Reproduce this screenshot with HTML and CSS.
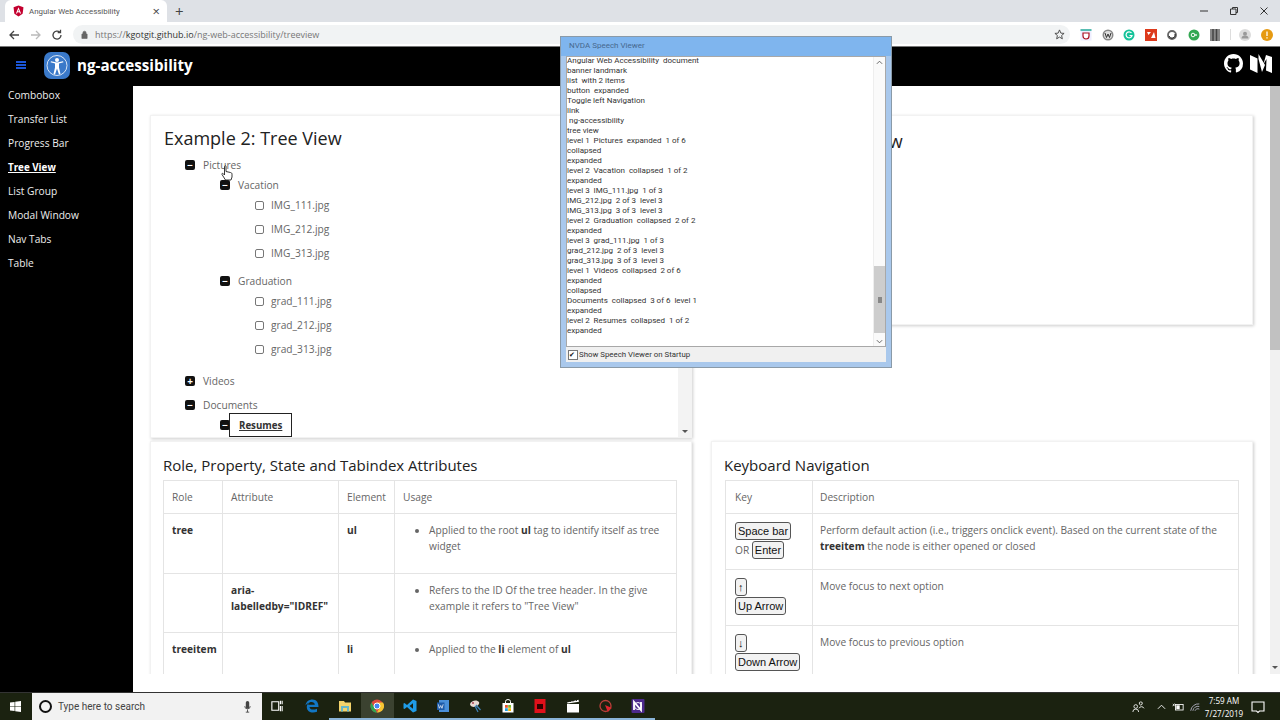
FILE: index.html
```html
<!DOCTYPE html>
<html lang="en">
<head>
    <meta charset="UTF-8">
    <title>Angular Web Accessibility</title>
    <link rel="stylesheet" href="styles.css">
</head>
<body>
<div class="screen">
    <div class="tabstrip">
        <div class="tab">
            <svg class="tab-logo" viewBox="0 0 12 12"><path d="M6 0 11.4 2 10.5 9 6 12 1.500 9 .6 2Z" fill="#c3002f"/><path d="M6 2 3.200 8.800H4.400L5 7.300H7L7.600 8.800H8.800ZM5.400 6.300 6 4.600 6.600 6.300Z" fill="#fff"/></svg>
            <span class="tab-title">Angular Web Accessibility</span>
            <span class="tab-close">×</span>
        </div>
        <span class="tab-new">+</span>
        <div class="win-btns">
            <svg viewBox="0 0 10 10"><path d="M1 5H9" stroke="#333"/></svg>
            <svg viewBox="0 0 10 10"><path d="M1.500 3H7V8.500H1.500ZM3.500 3V1.500H8.500V6.500H7" fill="none" stroke="#333"/></svg>
            <svg viewBox="0 0 10 10"><path d="M1.500 1.500 8.500 8.500M8.500 1.500 1.500 8.500" stroke="#333"/></svg>
        </div>
    </div>
    <div class="toolbar">
        <svg class="nav-icon" viewBox="0 0 12 12"><path d="M11 6H2M6 2 2 6 6 10" fill="none" stroke="#444" stroke-width="1.300"/></svg>
        <svg class="nav-icon" viewBox="0 0 12 12"><path d="M1 6H10M6 2 10 6 6 10" fill="none" stroke="#bbb" stroke-width="1.300"/></svg>
        <svg class="nav-icon" viewBox="0 0 12 12"><path d="M10 6A4 4 0 1 1 8.800 3.200M9.500 .8V3.600H6.700" fill="none" stroke="#444" stroke-width="1.300"/></svg>
        <div class="omnibox">
            <svg class="lock" viewBox="0 0 8 10"><path d="M1 4.500H7V9.500H1ZM2.200 4.500V3A1.800 1.800 0 0 1 5.800 3V4.500" fill="#666" stroke="#666" stroke-width=".7" fill-opacity="1"/></svg>
            <span class="url">https://<b>kgotgit.github.io</b>/ng-web-accessibility/treeview</span>
            <svg class="star" viewBox="0 0 12 12"><path d="M6 1 7.500 4.500 11 4.800 8.300 7.100 9.100 10.700 6 8.800 2.900 10.700 3.700 7.100 1 4.800 4.500 4.500Z" fill="none" stroke="#444"/></svg>
        </div>
        <div class="extensions">
            <svg viewBox="0 0 12 12"><rect x=".5" y=".5" width="11" height="11" fill="#eef"/><path d="M.5 1H11.500" stroke="#2a9" stroke-width="1.500"/><path d="M3 4H9V7A3 3 0 0 1 3 7Z" fill="#fff" stroke="#a12" stroke-width="1.200"/></svg>
            <svg viewBox="0 0 12 12"><circle cx="6" cy="6" r="5.500" fill="#888"/><circle cx="6" cy="6" r="4" fill="#ddd"/><path d="M3 4 4.500 8.500 6 5 7.500 8.500 9 4" fill="none" stroke="#333"/></svg>
            <svg viewBox="0 0 12 12"><circle cx="6" cy="6" r="5.500" fill="#15c39a"/><path d="M8.500 4A3 3 0 1 0 9 6.500H6.500" fill="none" stroke="#fff" stroke-width="1.200"/></svg>
            <svg viewBox="0 0 12 12"><rect width="12" height="12" fill="#dd3a1c"/><path d="M2 3H6L3.500 6M6 9 9 3 10.500 9Z" fill="#fff"/></svg>
            <svg viewBox="0 0 12 12"><circle cx="6" cy="6" r="4" fill="none" stroke="#666" stroke-width="1.800"/><path d="M3 7A3 3 0 0 0 9 5" fill="none" stroke="#222"/></svg>
            <svg viewBox="0 0 12 12"><circle cx="6" cy="6" r="5.500" fill="#34a853"/><circle cx="5" cy="6" r="1.800" fill="none" stroke="#fff"/><path d="M8 5V7M7 6H9" stroke="#fff" stroke-width=".8"/></svg>
            <svg viewBox="0 0 12 12"><rect x="1" width="10" height="12" fill="#888"/><path d="M4 0V12M7.500 0V12" stroke="#444" stroke-width="1.500"/></svg>
            <i class="ext-sep"></i>
            <svg viewBox="0 0 12 12"><circle cx="6" cy="6" r="6" fill="#dcdcdc"/><circle cx="6" cy="4.700" r="2" fill="#999"/><path d="M2.500 9.500A3.500 3 0 0 1 9.500 9.500Z" fill="#999"/></svg>
            <svg viewBox="0 0 12 12"><circle cx="6" cy="6" r="6" fill="#e69a12"/><path d="M6 2.500V7M6 8.300V9.500" stroke="#fff" stroke-width="1.300"/></svg>
        </div>
    </div>
    <div class="app">
        <header class="app-header">
            <span class="burger"><i></i><i></i><i></i></span>
            <span class="brand-logo">
                <svg viewBox="0 0 26 26"><circle cx="13" cy="13" r="10" fill="none" stroke="#fff" stroke-width=".8"/><circle cx="13" cy="7.500" r="2" fill="#fff"/><path d="M6.500 9.800 11 11V15L9.500 21.500 11 22 13 16 15 22 16.500 21.500 15 15V11L19.500 9.800 19 8.800 13 10 7 8.800Z" fill="#fff"/></svg>
            </span>
            <span class="brand-name">ng-accessibility</span>
            <span class="header-links">
                <svg class="github" viewBox="0 0 16 16"><path fill="#fff" d="M8 0C3.580 0 0 3.580 0 8c0 3.540 2.290 6.530 5.470 7.590.4.070.55-.17.55-.38 0-.19-.01-.82-.01-1.490-2.010.37-2.530-.49-2.690-.94-.09-.23-.48-.94-.82-1.130-.28-.15-.68-.52-.01-.53.630-.01 1.080.58 1.230.82.720 1.210 1.870.87 2.330.66.070-.52.280-.87.510-1.070-1.780-.2-3.640-.89-3.640-3.950 0-.87.31-1.590.82-2.150-.08-.2-.36-1.020.08-2.120 0 0 .67-.21 2.200.82.640-.18 1.320-.27 2-.27s1.360.09 2 .27c1.530-1.040 2.200-.82 2.200-.82.44 1.100.16 1.920.08 2.120.51.560.82 1.270.82 2.150 0 3.070-1.870 3.750-3.650 3.950.29.250.54.730.54 1.480 0 1.070-.01 1.930-.01 2.200 0 .21.150.46.550.38A8.010 8.010 0 0 0 16 8c0-4.420-3.580-8-8-8z"/></svg>
                <svg class="medium" viewBox="0 0 22 19"><path fill="#fff" d="M0 1 7.500 4.500V19L0 15.500ZM8.500 0 15 11 12 18 8.500 5ZM16 1 22 3V19L16 16.500 16.500 5 13.500 10Z"/></svg>
            </span>
        </header>
        <div class="app-body">
            <nav class="sidebar">
                <a>Combobox</a>
                <a>Transfer List</a>
                <a>Progress Bar</a>
                <a class="current">Tree View</a>
                <a>List Group</a>
                <a>Modal Window</a>
                <a>Nav Tabs</a>
                <a>Table</a>
            </nav>
            <main class="content">
                <div class="content-clip">
                    <div class="cards">
                        <section class="card card-demo">
                            <div class="demo-inner">
                                <h1 class="demo-title">Example 2: Tree View</h1>
                                <ul class="tree">
                                    <li>
                                        <div class="node"><span class="sq">−</span>Pictures</div>
                                        <ul>
                                            <li>
                                                <div class="node"><span class="sq">−</span>Vacation</div>
                                                <ul>
                                                    <li><div class="node"><span class="box"></span>IMG_111.jpg</div></li>
                                                    <li><div class="node"><span class="box"></span>IMG_212.jpg</div></li>
                                                    <li><div class="node"><span class="box"></span>IMG_313.jpg</div></li>
                                                </ul>
                                            </li>
                                            <li>
                                                <div class="node"><span class="sq">−</span>Graduation</div>
                                                <ul>
                                                    <li><div class="node"><span class="box"></span>grad_111.jpg</div></li>
                                                    <li><div class="node"><span class="box"></span>grad_212.jpg</div></li>
                                                    <li><div class="node"><span class="box"></span>grad_313.jpg</div></li>
                                                </ul>
                                            </li>
                                        </ul>
                                    </li>
                                    <li><div class="node"><span class="sq">+</span>Videos</div></li>
                                    <li>
                                        <div class="node"><span class="sq">−</span>Documents</div>
                                        <ul>
                                            <li><div class="node"><span class="sq">−</span><span class="focused">Resumes</span></div></li>
                                        </ul>
                                    </li>
                                </ul>
                            </div>
                            <div class="demo-scroll"><span class="arrow-down"></span></div>
                        </section>
                        <section class="card card-code">
                            <h1 class="demo-title">Example 1: Tree View</h1>
                        </section>
                        <section class="card card-table">
                            <h2>Role, Property, State and Tabindex Attributes</h2>
                            <table class="roles">
                                <tr class="head"><td class="c-role">Role</td><td class="c-attr">Attribute</td><td class="c-el">Element</td><td>Usage</td></tr>
                                <tr class="r60">
                                    <td><b>tree</b></td><td></td><td><b>ul</b></td>
                                    <td><ul><li>Applied to the root <b>ul</b> tag to identify itself as tree widget</li></ul></td>
                                </tr>
                                <tr class="r60">
                                    <td></td><td><b>aria-labelledby="IDREF"</b></td><td></td>
                                    <td><ul><li>Refers to the ID Of the tree header. In the give example it refers to "Tree View"</li></ul></td>
                                </tr>
                                <tr class="r60">
                                    <td><b>treeitem</b></td><td></td><td><b>li</b></td>
                                    <td><ul><li>Applied to the <b>li</b> element of <b>ul</b></li></ul></td>
                                </tr>
                            </table>
                        </section>
                        <section class="card card-table">
                            <h2>Keyboard Navigation</h2>
                            <table class="keys">
                                <tr class="head"><td class="c-key">Key</td><td>Description</td></tr>
                                <tr class="r56">
                                    <td class="keycell"><kbd>Space bar</kbd><br>OR <kbd>Enter</kbd></td>
                                    <td>Perform default action (i.e., triggers onclick event). Based on the current state of the <b>treeitem</b> the node is either opened or closed</td>
                                </tr>
                                <tr class="r56">
                                    <td class="keycell"><kbd class="thin">↑</kbd><br><kbd>Up Arrow</kbd></td>
                                    <td>Move focus to next option</td>
                                </tr>
                                <tr class="r56">
                                    <td class="keycell"><kbd class="thin">↓</kbd><br><kbd>Down Arrow</kbd></td>
                                    <td>Move focus to previous option</td>
                                </tr>
                            </table>
                        </section>
                    </div>
                </div>
            </main>
            <div class="page-scroll"><div class="page-thumb"></div><span class="arrow-down"></span></div>
        </div>
    </div>
    <footer class="taskbar">
        <svg class="start" viewBox="0 0 12 12"><path fill="#fff" d="M0 1.700 5 1V5.700H0ZM5.700 .9 12 0V5.700H5.700ZM0 6.300H5V11L0 10.300ZM5.700 6.300H12V12L5.700 11.100Z"/></svg>
        <div class="search">
            <span class="cortana"></span>
            <span class="search-text">Type here to search</span>
            <svg class="mic" viewBox="0 0 8 14"><rect x="2" width="4" height="9" rx="2" fill="#444"/><path d="M.8 6A3.200 3.200 0 0 0 7.200 6M4 10V13M2 13H6" fill="none" stroke="#444"/></svg>
        </div>
        <div class="task first">
            <svg viewBox="0 0 14 14"><path d="M1 2H9V12H1ZM11 1V5M13 1V5M11 7V13M13 7V13" fill="none" stroke="#fff" stroke-width="1.300"/></svg>
        </div>
        <div class="task">
            <svg viewBox="0 0 14 14"><path fill="#1277c4" d="M.5 6.500C1 2.500 4 .5 7.500.5 11.500.5 13.500 3.500 13.500 8H4.500C4.700 10.500 8 11.500 12 9.700V12.700C7 14.700 1.500 12.800 1.800 7.500 2 5.500 3 4.500 4.500 3.500 3.500 4.500 3.300 5.300 3.200 5.800H9.800C9.800 3 6.500 2.500 4.500 3.500 2.800 4 1.500 5 .5 6.500Z"/></svg>
        </div>
        <div class="task on">
            <svg viewBox="0 0 14 14"><path fill="#f3d36b" d="M1 2H6L7 3.500H13V12.500H1Z"/><path fill="#66b7c9" d="M3 7H11V12.500H9V9H5V12.500H3Z"/></svg>
        </div>
        <div class="task on active">
            <svg viewBox="0 0 14 14"><circle cx="7" cy="7" r="6.500" fill="#dd4b3e"/><path fill="#f6c532" d="M7 3.500H13A6.500 6.500 0 0 1 7 13.500L10 8Z"/><path fill="#2fa551" d="M1.500 3.500 4.500 9 7 13.500A6.500 6.500 0 0 1 1.500 3.500Z"/><circle cx="7" cy="7" r="3" fill="#4688f1" stroke="#fff"/></svg>
        </div>
        <div class="task on">
            <svg viewBox="0 0 14 14"><path fill="#1f9ce8" d="M10 .5 13.500 2V12L10 13.500 4 8 1.500 10 .5 9.400V4.600L1.500 4 4 6ZM10 4.200 6.500 7 10 9.800Z"/></svg>
        </div>
        <div class="task on">
            <svg viewBox="0 0 14 14"><rect x="3" y="1" width="10" height="12" fill="#4a90d9"/><rect x="1" y="3.500" width="7.500" height="7.500" fill="#1d5ba8"/><path d="M2.300 5.300 3.300 9.300 4.700 6.500 6 9.300 7.200 5.300" fill="none" stroke="#fff" stroke-width=".7"/></svg>
        </div>
        <div class="task on">
            <svg viewBox="0 0 14 14"><path fill="#e8d8d2" d="M2 5C3 1.500 9 0 11 3 12 5 9 8 6 8 4 8 2 7 2 5Z"/><path d="M7 7 10 13M8 6 12.500 11" stroke="#3c7fb5" stroke-width="1.300"/><circle cx="5" cy="4" r="1" fill="#a45"/></svg>
        </div>
        <div class="task on">
            <svg viewBox="0 0 14 14"><path d="M4.500 4V2.500A2.500 2 0 0 1 9.500 2.500V4" fill="none" stroke="#fff"/><rect x="1.500" y="4" width="11" height="9.500" fill="#fff"/><rect x="4" y="6" width="2.800" height="2.800" fill="#e8532b"/><rect x="7.200" y="6" width="2.800" height="2.800" fill="#7cb82f"/><rect x="4" y="9.200" width="2.800" height="2.800" fill="#1d9fe0"/><rect x="7.200" y="9.200" width="2.800" height="2.800" fill="#f7b500"/></svg>
        </div>
        <div class="task on">
            <svg viewBox="0 0 14 14"><rect x="1.500" width="11" height="14" fill="#e0101a"/><rect x="4" y="5" width="6" height="5" fill="#300"/></svg>
        </div>
        <div class="task on">
            <svg viewBox="0 0 14 14"><rect x="1" y="5" width="12" height="8.500" fill="#fff"/><path d="M1 3.500 12.500 .8 13 2.800 1.500 4.500Z" fill="#fff"/><path d="M4 3 5 1.800M7 2.500 8 1.200M10 2 11 .9" stroke="#222"/></svg>
        </div>
        <div class="task on">
            <svg viewBox="0 0 14 14"><circle cx="6.500" cy="7" r="5.500" fill="none" stroke="#b9403a" stroke-width="1.300"/><path d="M6 6 13 9 10 10.500 9 13.500Z" fill="#e0242d"/></svg>
        </div>
        <div class="task on">
            <svg viewBox="0 0 14 14"><rect x=".5" width="13" height="14" rx="1" fill="#4d2a8c"/><path d="M3 11V3L10 11V3" fill="none" stroke="#fff" stroke-width="1.800"/><circle cx="7" cy="7" r="3.500" fill="none" stroke="#fff"/></svg>
        </div>
        <div class="tray">
            <svg class="t-people" viewBox="0 0 14 12"><circle cx="4" cy="6" r="2" fill="none" stroke="#fff" stroke-width=".9"/><path d="M.8 12A3.200 3.200 0 0 1 7.200 12M8 1.500 9.500 1 11 1.500V3.500L9.500 4.500 8 3.500ZM7.500 8A3 3 0 0 1 13 8" fill="none" stroke="#fff" stroke-width=".9"/></svg>
            <svg class="t-up" viewBox="0 0 10 6"><path d="M1 5 5 1 9 5" fill="none" stroke="#fff"/></svg>
            <svg class="t-batt" viewBox="0 0 14 10"><rect x="4" y="2" width="9" height="6.500" fill="none" stroke="#fff"/><rect x="5" y="3" width="4" height="4.500" fill="#fff"/><path d="M1 1.500 3 3.500M3 1 1 4" stroke="#fff"/></svg>
            <svg class="t-wifi" viewBox="0 0 14 12"><path d="M2 11A9 9 0 0 1 12 3M4.500 11A6 6 0 0 1 12 6M7 11A3.500 3.500 0 0 1 12 9" fill="none" stroke="#aab" stroke-width="1.100"/></svg>
            <div class="clock"><span>7:59 AM</span><span>7/27/2019</span></div>
            <svg class="t-note" viewBox="0 0 14 14"><path d="M1 2H13V11H8.500L7 12.500 5.500 11H1Z" fill="none" stroke="#fff" stroke-width="1.100"/></svg>
        </div>
    </footer>

    <!-- floating windows and the mouse pointer sit on top of the page -->
    <div class="speech">
        <div class="speech-title">NVDA Speech Viewer</div>
        <div class="speech-body">
            <div class="speech-list">
                <div class="speech-lines">
                    <div>Angular Web Accessibility  document</div>
                    <div>banner landmark</div>
                    <div>list  with 2 items</div>
                    <div>button  expanded</div>
                    <div>Toggle left Navigation</div>
                    <div>link</div>
                    <div> ng-accessibility</div>
                    <div>tree view</div>
                    <div>level 1  Pictures  expanded  1 of 6</div>
                    <div>collapsed</div>
                    <div>expanded</div>
                    <div>level 2  Vacation  collapsed  1 of 2</div>
                    <div>expanded</div>
                    <div>level 3  IMG_111.jpg  1 of 3</div>
                    <div>IMG_212.jpg  2 of 3  level 3</div>
                    <div>IMG_313.jpg  3 of 3  level 3</div>
                    <div>level 2  Graduation  collapsed  2 of 2</div>
                    <div>expanded</div>
                    <div>level 3  grad_111.jpg  1 of 3</div>
                    <div>grad_212.jpg  2 of 3  level 3</div>
                    <div>grad_313.jpg  3 of 3  level 3</div>
                    <div>level 1  Videos  collapsed  2 of 6</div>
                    <div>expanded</div>
                    <div>collapsed</div>
                    <div>Documents  collapsed  3 of 6  level 1</div>
                    <div>expanded</div>
                    <div>level 2  Resumes  collapsed  1 of 2</div>
                    <div>expanded</div>
                </div>
                <div class="speech-scroll">
                    <svg viewBox="0 0 8 5"><path d="M1 4 4 1 7 4" fill="none" stroke="#555"/></svg>
                    <div class="speech-track"><div class="speech-thumb"><i></i></div></div>
                    <svg viewBox="0 0 8 5"><path d="M1 1 4 4 7 1" fill="none" stroke="#555"/></svg>
                </div>
            </div>
            <div class="speech-foot"><span class="speech-check">✔</span>Show Speech Viewer on Startup</div>
        </div>
    </div>
    <svg class="pointer" viewBox="0 0 12 16"><path d="M3.500 1.500C3.500 .5 5 .5 5 1.500V6.500L9.500 7.500C10.500 7.700 11 8.300 11 9.200V12L10 15H4.500L1 9.500C.5 8.500 1.500 8 2.300 8.700L3.500 10Z" fill="#fff" stroke="#222" stroke-width=".9"/></svg>
</div>
</body>
</html>
```

FILE: styles.css
```css
*
{
    box-sizing: border-box;
}
html, body
{
    margin: 0;
    padding: 0;
}
.screen
{
    position: relative;
    width: 1280px;
    height: 720px;
    overflow: hidden;
    display: flex;
    flex-direction: column;
    background: #fff;
    font-family: "Open Sans", sans-serif;
    color: #555;
}

/* browser frame */
.tabstrip
{
    height: 22px;
    display: flex;
    align-items: center;
    background: #dee1e6;
    flex: none;
}
.tab
{
    width: 162px;
    height: 22px;
    margin-left: 5px;
    padding: 0 7px 0 8px;
    display: flex;
    align-items: center;
    background: #fff;
    border-radius: 6px 6px 0 0;
}
.tab-logo
{
    width: 11px;
    height: 12px;
    margin-right: 5px;
}
.tab-title
{
    flex: 1;
    font-family: Roboto, sans-serif;
    font-size: 7.900px;
    color: #555;
}
.tab-close
{
    font-size: 13px;
    color: #444;
}
.tab-new
{
    margin-left: 8px;
    font-size: 15px;
    color: #444;
}
.win-btns
{
    margin-left: auto;
    display: flex;
    gap: 20px;
    padding-right: 11px;
}
.win-btns svg
{
    width: 10px;
    height: 10px;
}
.toolbar
{
    height: 25px;
    display: flex;
    align-items: center;
    background: #fff;
    padding: 1px 0 0 8px;
    border-bottom: 1px solid #777;
    flex: none;
}
.nav-icon
{
    width: 12px;
    height: 12px;
    margin-right: 9.500px;
}
.omnibox
{
    width: 997px;
    height: 19px;
    margin-left: .500px;
    padding: 0 5.500px 0 8px;
    display: flex;
    align-items: center;
    background: #f1f3f4;
    border-radius: 10px;
}
.lock
{
    width: 7px;
    height: 9px;
    margin-right: 6px;
}
.url
{
    flex: 1;
    margin-left: 1px;
    font-size: 9px;
    color: #777;
}
.url b
{
    font-weight: 400;
    color: #333;
}
.star
{
    width: 11px;
    height: 11px;
}
.extensions
{
    margin-left: 10px;
    display: flex;
    align-items: center;
    gap: 9.500px;
}
.extensions svg
{
    width: 12px;
    height: 12px;
}
.ext-sep
{
    width: 1px;
    height: 11px;
    margin: 0 -1px;
    background: #ddd;
}

/* page header and side navigation */
.app
{
    flex: 1;
    min-height: 0;
    display: flex;
    flex-direction: column;
}
.app-header
{
    height: 39px;
    padding-bottom: 3px;
    display: flex;
    align-items: center;
    background: #000;
    color: #fff;
    flex: none;
}
.burger
{
    width: 10px;
    margin-left: 16px;
    display: flex;
    flex-direction: column;
    gap: 1.500px;
}
.burger i
{
    height: 1.500px;
    background: #1b55d6;
}
.brand-logo
{
    width: 26px;
    height: 27px;
    margin-left: 18px;
    background: #3a79c9;
    border-radius: 7px;
}
.brand-logo svg
{
    display: block;
    width: 26px;
    height: 27px;
}
.brand-name
{
    margin-left: 7px;
    font-size: 15.200px;
    font-weight: 700;
}
.header-links
{
    margin-left: auto;
    padding-right: 8px;
    margin-bottom: 3px;
    display: flex;
    gap: 7px;
}
.github
{
    width: 19px;
    height: 19px;
}
.medium
{
    width: 22px;
    height: 19px;
}
.app-body
{
    flex: 1;
    min-height: 0;
    display: flex;
}
.sidebar
{
    width: 133px;
    background: #000;
    flex: none;
}
.sidebar a
{
    display: block;
    height: 24px;
    line-height: 18px;
    padding-left: 8px;
    font-size: 10.200px;
    color: #eee;
}
.sidebar a.current
{
    line-height: 20px;
    font-size: 9.800px;
    font-weight: 700;
    color: #fff;
    text-decoration: underline;
}

/* main content */
.content
{
    flex: 1;
    min-width: 0;
    height: 606px;
}
.content-clip
{
    height: 588px;
    overflow: hidden;
    padding: 29px 17px 0;
}
.cards
{
    display: grid;
    grid-template-columns: 542px 542px;
    grid-template-rows: 323px auto;
    column-gap: 19px;
    row-gap: 3px;
}
.card
{
    background: #fff;
    border: 1px solid #f2f2f2;
    box-shadow: 1px 1px 3px rgba(0, 0, 0, .2);
}
.card-demo
{
    display: flex;
    overflow: hidden;
    border-right: 0;
}
.demo-inner
{
    flex: 1;
    padding: 9px 13px 0;
    overflow: hidden;
}
.demo-title
{
    margin: 0 0 4px;
    font-size: 18px;
    line-height: 26px;
    font-weight: 400;
    color: #222;
}
.demo-scroll
{
    position: relative;
    width: 14px;
    background: #f3f3f3;
    flex: none;
}
.demo-scroll .arrow-down
{
    position: absolute;
    left: 4px;
    bottom: 4px;
}
.arrow-down
{
    display: block;
    width: 0;
    height: 0;
    border-left: 3px solid transparent;
    border-right: 3px solid transparent;
    border-top: 3px solid #555;
}
.card-code
{
    height: 210px;
    padding: 12px 13px;
}

/* tree */
.tree, .tree ul
{
    list-style: none;
    margin: 0;
    padding: 0;
}
.tree
{
    padding-left: 21px;
}
.tree ul
{
    padding-left: 35px;
}
.tree li
{
    padding-bottom: 4px;
}
.node
{
    height: 20px;
    display: flex;
    align-items: center;
    font-size: 10.200px;
    color: #666;
}
.sq
{
    width: 10px;
    height: 10px;
    margin-right: 8px;
    display: flex;
    align-items: center;
    justify-content: center;
    background: #111;
    border-radius: 2px;
    color: #fff;
    font-size: 10px;
    font-weight: 700;
    line-height: 10px;
}
.box
{
    width: 9px;
    height: 9px;
    margin-right: 7px;
    border: 1px solid #777;
    border-radius: 2px;
}
.focused
{
    position: relative;
    height: 24px;
    margin-left: -9px;
    padding: 0 9px;
    display: flex;
    align-items: center;
    border: 1px solid #222;
    background: #fff;
    font-size: 9.700px;
    font-weight: 700;
    color: #333;
    text-decoration: underline;
}

/* attribute tables */
.card-table
{
    padding: 0 12px;
    height: 400px;
}
.card-table h2
{
    margin: 0;
    height: 38px;
    line-height: 47px;
    font-size: 15px;
    font-weight: 500;
    color: #222;
}
table
{
    width: 514px;
    table-layout: fixed;
    border-collapse: collapse;
    font-size: 10.200px;
    line-height: 16px;
    color: #666;
}
td
{
    padding: 8px;
    vertical-align: top;
    border: 1px solid #e4e4e4;
}
td b
{
    color: #333;
}
.head td
{
    height: 33px;
    vertical-align: middle;
}
.c-role
{
    width: 59px;
}
.c-attr
{
    width: 116px;
}
.c-el
{
    width: 56px;
}
.r60 td
{
    height: 59.500px;
}
.r56 td
{
    height: 56px;
}
td ul
{
    margin: 0;
    padding-left: 26px;
}
.keys
{
    margin-left: 1px;
}
.keys td
{
    padding-left: 7px;
}
.c-key
{
    width: 87px;
}
.keys .keycell, .keys .c-key
{
    padding-left: 9px;
}
.keycell
{
    padding: 8px 8px 0 9px;
    line-height: 19px;
}
kbd
{
    display: inline-block;
    height: 18px;
    padding: 0 2px;
    border: 1px solid #555;
    border-radius: 3px;
    background: #f2f2f2;
    font-family: "Liberation Sans", sans-serif;
    font-size: 11px;
    font-weight: 400;
    line-height: 16px;
    color: #111;
    vertical-align: top;
}
.page-scroll
{
    position: relative;
    width: 10px;
    height: 588px;
    background: #f1f1f1;
    flex: none;
}
.page-thumb
{
    height: 264px;
    background: #c1c1c1;
}
.page-scroll .arrow-down
{
    position: absolute;
    left: 2px;
    bottom: 5px;
}

/* windows taskbar */
.taskbar
{
    height: 28px;
    display: flex;
    align-items: stretch;
    background: #1b2210;
    border-top: 1px solid #333;
    flex: none;
}
.start
{
    width: 11px;
    height: 11px;
    margin: 8px 11px 0 10px;
    flex: none;
}
.search
{
    width: 230px;
    padding: 0 11px 0 7px;
    display: flex;
    align-items: center;
    background: #f2f2f2;
    flex: none;
}
.cortana
{
    width: 13px;
    height: 13px;
    margin-right: 6px;
    border: 2px solid #111;
    border-radius: 50%;
}
.search-text
{
    flex: 1;
    font-family: Roboto, sans-serif;
    font-size: 10px;
    color: #444;
}
.mic
{
    width: 7px;
    height: 12px;
}
.task
{
    width: 32.600px;
    display: flex;
    align-items: center;
    justify-content: center;
    border-bottom: 2px solid transparent;
    flex: none;
}
.task svg
{
    width: 14px;
    height: 14px;
}
.task.first
{
    width: 30px;
    margin-right: 4px;
}
.task.first svg
{
    width: 12px;
    height: 12px;
}
.task.on
{
    border-bottom-color: #8ab4d8;
}
.task.active
{
    background: #3b4230;
}
.tray
{
    flex: 1;
    display: flex;
    align-items: center;
    justify-content: flex-end;
    padding-right: 15px;
    color: #fff;
}
.t-people
{
    width: 13px;
    height: 11px;
}
.t-up
{
    width: 9px;
    height: 6px;
    margin-left: 12px;
}
.t-batt
{
    width: 12px;
    height: 10px;
    margin-left: 6px;
}
.t-wifi
{
    width: 12px;
    height: 11px;
    margin-left: 5px;
}
.clock
{
    width: 50px;
    margin-left: -2px;
    display: flex;
    flex-direction: column;
    align-items: center;
    font-size: 8.100px;
    line-height: 13px;
}
.t-note
{
    width: 14px;
    height: 14px;
    margin-left: 2px;
}

/* NVDA speech viewer window */
.speech
{
    position: absolute;
    left: 560px;
    top: 36px;
    width: 332px;
    height: 332px;
    padding: 0 5px 5px;
    background: #a9c8ec;
    border: 1px solid #8a9aa8;
    display: flex;
    flex-direction: column;
    font-family: Roboto, sans-serif;
}
.speech-title
{
    height: 19px;
    margin: 0 -5px;
    padding-left: 8px;
    background: #7fb5ee;
    font-size: 8px;
    line-height: 18px;
    color: #47698e;
}
.speech-body
{
    flex: 1;
    display: flex;
    flex-direction: column;
    background: #f0f0f0;
}
.speech-list
{
    height: 291px;
    display: flex;
    background: #fff;
    border: 1px solid #a8a8a8;
}
.speech-lines
{
    flex: 1;
    margin-top: -1px;
    font-size: 8px;
    line-height: 10px;
    color: #333;
}
.speech-lines div
{
    white-space: pre;
}
.speech-scroll
{
    width: 12px;
    display: flex;
    flex-direction: column;
    align-items: center;
    padding: 3px 0 2px;
    gap: 2px;
    border-left: 1px solid #eee;
    background: #fafafa;
}
.speech-scroll svg
{
    width: 7px;
    height: 5px;
    flex: none;
}
.speech-track
{
    flex: 1;
    width: 100%;
    display: flex;
    flex-direction: column;
    justify-content: flex-end;
    padding-bottom: 4px;
}
.speech-thumb
{
    height: 67px;
    display: flex;
    align-items: center;
    justify-content: center;
    background: #cdcdcd;
}
.speech-thumb i
{
    width: 4px;
    height: 6px;
    background: #888;
}
.speech-foot
{
    flex: 1;
    display: flex;
    align-items: center;
    padding-left: 2px;
    font-size: 7.850px;
    color: #333;
}
.speech-check
{
    width: 10px;
    height: 10px;
    margin-right: 1px;
    border: 1px solid #777;
    background: #fff;
    font-family: "DejaVu Sans", sans-serif;
    font-size: 7px;
    line-height: 8px;
    color: #111;
}
.pointer
{
    position: absolute;
    left: 221px;
    top: 165px;
    width: 12px;
    height: 16px;
}
```
